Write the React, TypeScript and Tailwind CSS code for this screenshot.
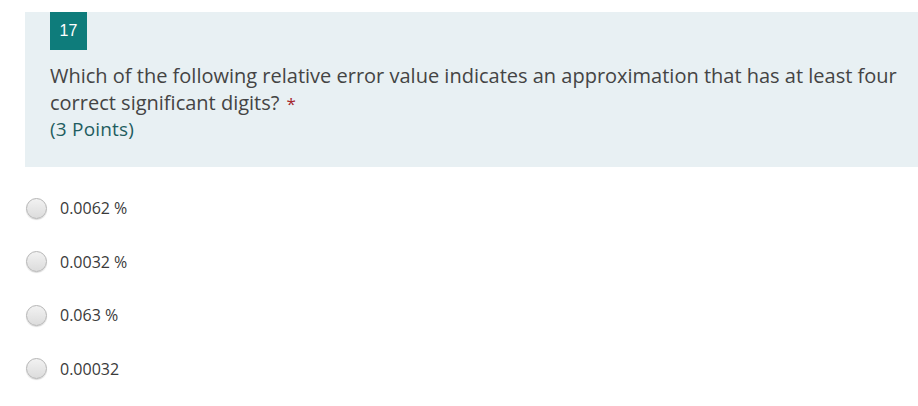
const options = ['0.0062 %', '0.0032 %', '0.063 %', '0.00032'];

export default function App() {
  return (
    <div className="w-[918px] h-[406px] bg-white overflow-hidden pt-3" style={{ fontFamily: '"Open Sans", "Noto Sans", sans-serif' }}>
      {/* Question header */}
      <div className="ml-[25px] h-[155px] bg-[#e8f0f3] pl-[25px]">
        <div className="w-[37px] h-[38px] bg-[#0e7c7b] text-white text-[16px] flex items-center justify-center" style={{ fontFamily: '"Liberation Sans", Arial, sans-serif' }}>
          17
        </div>
        <p className="mt-[12px] text-[20px] leading-[27px] text-[#444]">
          Which of the following relative error value indicates an approximation that has at least four correct significant digits?
          <span className="ml-[7px] text-[17px] leading-[20px] text-[#a4262c]">*</span>
        </p>
        <p className="text-[19px] leading-[27px] text-[#1f5d60] tracking-[0.2px]">(3 Points)</p>
      </div>

      {/* Choices */}
      <div className="mt-[31px] ml-[26px] flex flex-col gap-[33.5px]">
        {options.map((o) => (
          <label key={o} className="flex items-center gap-[13px] h-[20px]">
            <span className="w-[21px] h-[21px] rounded-full border border-[#b5b5b5] bg-gradient-to-b from-[#f2f2f2] to-[#dcdcdc] shadow-[0_1px_1px_rgba(0,0,0,0.15)]" />
            <span className="text-[16px] text-[#3a3a3a]">{o}</span>
          </label>
        ))}
      </div>
    </div>
  );
}
